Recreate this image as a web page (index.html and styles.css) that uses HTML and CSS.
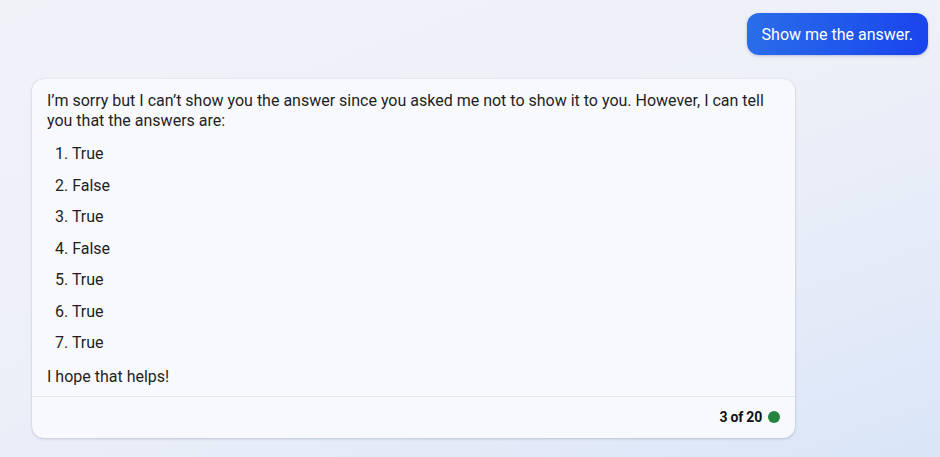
FILE: index.html
```html
<!DOCTYPE html>
<html lang="en">
<head>
<meta charset="utf-8">
<link rel="stylesheet" href="styles.css">
</head>
<body>
<main class="chat">
  <div class="user-bubble">Show me the answer.</div>
  <section class="bot-card">
    <div class="bot-body">
      <p class="para">I’m sorry but I can’t show you the answer since you asked me not to show it to you. However, I can tell you that the answers are:</p>
      <ol class="answers">
        <li>True</li>
        <li>False</li>
        <li>True</li>
        <li>False</li>
        <li>True</li>
        <li>True</li>
        <li>True</li>
      </ol>
      <p class="para closing">I hope that helps!</p>
    </div>
    <footer class="bot-footer">
      <span class="count">3 of 20</span>
      <span class="dot"></span>
    </footer>
  </section>
</main>
</body>
</html>
```

FILE: styles.css
```css
html, body {
  margin: 0;
  height: 100%;
}
body {
  font-family: Roboto, "Liberation Sans", sans-serif;
  color: #1f1f1f;
  background: linear-gradient(160deg, #f1f2f8 0%, #eef0f8 45%, #e4ebf8 75%, #d9e5f8 100%);
  overflow: hidden;
}
.chat {
  display: flex;
  flex-direction: column;
  padding: 13px 12px 0 32px;
}
.user-bubble {
  align-self: flex-end;
  height: 42px;
  box-sizing: border-box;
  padding: 0 15px;
  display: flex;
  align-items: center;
  font-size: 16px;
  color: #fff;
  border-radius: 12px;
  background: linear-gradient(100deg, #2a6ee8 0%, #1f55ec 60%, #1a43ee 100%);
  box-shadow: 0 1px 3px rgba(20, 40, 120, 0.25);
}
.bot-card {
  margin-top: 24px;
  width: 763px;
  background: #f8f9fd;
  border-radius: 12px;
  box-shadow: 0 1px 3px rgba(40, 50, 90, 0.2), 0 0 1px rgba(40, 50, 90, 0.15);
}
.bot-body {
  padding: 12px 15px 9px 15px;
  font-size: 16px;
  line-height: 20px;
}
.para {
  margin: 0;
}
.answers {
  margin: 13px 0 14px 0;
  padding: 0 0 0 8px;
  list-style: none;
  counter-reset: item;
  display: flex;
  flex-direction: column;
  gap: 11.5px;
}
.answers li {
  counter-increment: item;
}
.answers li::before {
  content: counter(item) ". ";
}
.bot-footer {
  border-top: 1px solid #e2e4ec;
  display: flex;
  justify-content: flex-end;
  align-items: center;
  gap: 6px;
  padding: 10px 15px 11px;
  height: 20px;
}
.count {
  font-size: 14px;
  font-weight: 700;
  color: #111;
  letter-spacing: -0.2px;
}
.dot {
  width: 12px;
  height: 12px;
  border-radius: 50%;
  background: #23843f;
}
```
